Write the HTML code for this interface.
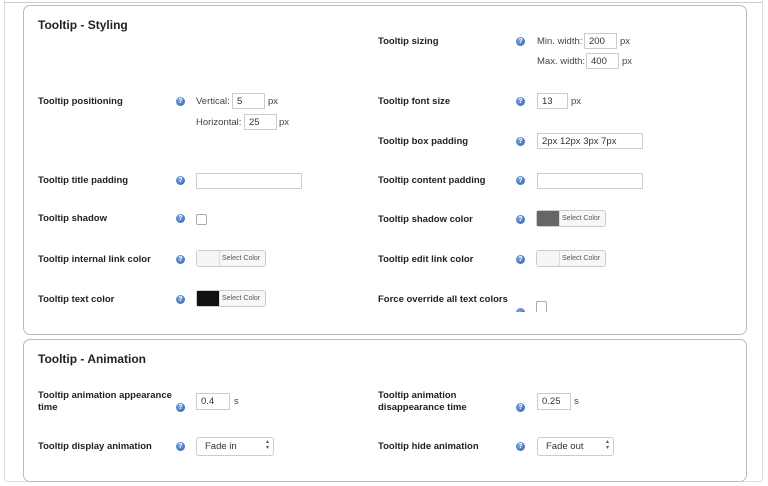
<!DOCTYPE html><html style="overflow:hidden;height:486px"><head><style>
body{margin:0;width:768px;height:486px;background:#fff;position:relative;overflow:hidden;font-family:"Liberation Sans",Arial,sans-serif;font-size:9.5px;color:#333}
.a{position:absolute}
.frame{position:absolute;left:4px;top:-10px;width:757px;height:490px;border:1px solid #ddd;border-radius:4px}
.panel{position:absolute;left:23px;width:722px;border:1px solid #bbb;border-radius:7px;background:#fff;overflow:hidden}
h3{position:absolute;margin:0;font-size:12px;font-weight:bold;color:#222;left:13px}
.l{position:absolute;font-weight:bold;color:#222;font-size:9.5px;line-height:12px}
.q{position:absolute;width:9px;height:9px;border-radius:50%;background:radial-gradient(circle at 40% 35%,#7fa7e0,#2a5caa);color:#fff;font-size:7px;font-weight:bold;text-align:center;line-height:9px}
.in{position:absolute;border:1px solid #ccc;height:16px;box-sizing:border-box;padding:2px 4px;font-size:9.5px;line-height:11px;color:#333;background:#fff}
.t{position:absolute;font-size:9.5px;color:#444;line-height:12px}
.cb{position:absolute;width:11px;height:11px;border:1px solid #aaa;box-sizing:border-box;border-radius:2px;background:#fff}
.cp{position:absolute;width:70px;height:17px;border:1px solid #ccc;border-radius:3px;box-sizing:border-box;background:#f7f7f7;font-size:7px;color:#555}
.cp .s{position:absolute;left:0;top:0;width:22px;height:15px;border-right:1px solid #ddd}
.cp span{position:absolute;left:25px;top:4px}
.sel{position:absolute;border:1px solid #ccc;border-radius:3px;height:19px;box-sizing:border-box;padding:3px 8px;font-size:9.5px;color:#333;background:#fff}
.sel:after{content:"\25B4\A\25BE";white-space:pre;position:absolute;right:4px;top:1px;font-size:6px;line-height:6px;color:#555}
</style></head><body>
<div class="frame"></div>
<div class="a" style="left:4px;top:2px;width:758px;height:1px;background:#ccc"></div>
<div class="panel" style="top:5px;height:328px">
<div style="position:absolute;left:-23px;top:-5px;width:768px;height:486px">
<h3 style="left:37px;top:17px">Tooltip - Styling</h3>
<div class="l" style="left:377px;top:35px">Tooltip sizing</div><div class="q" style="left:515px;top:36px">?</div>
<div class="t" style="left:536px;top:35px">Min. width:</div><div class="in" style="left:583px;top:32px;width:33px">200</div><div class="t" style="left:619px;top:35px">px</div>
<div class="t" style="left:536px;top:55px">Max. width:</div><div class="in" style="left:585px;top:52px;width:33px">400</div><div class="t" style="left:621px;top:55px">px</div>

<div class="l" style="left:37px;top:95px">Tooltip positioning</div><div class="q" style="left:175px;top:96px">?</div>
<div class="t" style="left:195px;top:95px">Vertical:</div><div class="in" style="left:231px;top:92px;width:33px">5</div><div class="t" style="left:267px;top:95px">px</div>
<div class="t" style="left:195px;top:116px">Horizontal:</div><div class="in" style="left:243px;top:113px;width:33px">25</div><div class="t" style="left:278px;top:116px">px</div>
<div class="l" style="left:377px;top:95px">Tooltip font size</div><div class="q" style="left:515px;top:96px">?</div>
<div class="in" style="left:536px;top:92px;width:31px">13</div><div class="t" style="left:570px;top:95px">px</div>
<div class="l" style="left:377px;top:135px">Tooltip box padding</div><div class="q" style="left:515px;top:136px">?</div>
<div class="in" style="left:536px;top:132px;width:106px">2px 12px 3px 7px</div>

<div class="l" style="left:37px;top:174px">Tooltip title padding</div><div class="q" style="left:175px;top:175px">?</div>
<div class="in" style="left:195px;top:172px;width:106px"></div>
<div class="l" style="left:377px;top:174px">Tooltip content padding</div><div class="q" style="left:515px;top:175px">?</div>
<div class="in" style="left:536px;top:172px;width:106px"></div>

<div class="l" style="left:37px;top:212px">Tooltip shadow</div><div class="q" style="left:175px;top:213px">?</div>
<div class="cb" style="left:195px;top:213px"></div>
<div class="l" style="left:377px;top:213px">Tooltip shadow color</div><div class="q" style="left:515px;top:214px">?</div>
<div class="cp" style="left:535px;top:209px"><div class="s" style="background:#666"></div><span>Select Color</span></div>

<div class="l" style="left:37px;top:253px">Tooltip internal link color</div><div class="q" style="left:175px;top:254px">?</div>
<div class="cp" style="left:195px;top:249px"><div class="s" style="background:#f5f5f5"></div><span>Select Color</span></div>
<div class="l" style="left:377px;top:253px">Tooltip edit link color</div><div class="q" style="left:515px;top:254px">?</div>
<div class="cp" style="left:535px;top:249px"><div class="s" style="background:#f5f5f5"></div><span>Select Color</span></div>

<div class="l" style="left:37px;top:293px">Tooltip text color</div><div class="q" style="left:175px;top:294px">?</div>
<div class="cp" style="left:195px;top:289px"><div class="s" style="background:#111"></div><span>Select Color</span></div>
<div class="l" style="left:377px;top:293px">Force override all text colors</div>
<div class="a" style="left:377px;top:300px;width:260px;height:11px;overflow:hidden"><div class="q" style="left:138px;top:7px"></div><div class="cb" style="left:158px;top:0px;height:20px"></div></div>
</div></div>

<div class="panel" style="top:339px;height:141px">
<div style="position:absolute;left:-23px;top:-339px;width:768px;height:486px">
<h3 style="left:37px;top:351px">Tooltip - Animation</h3>
<div class="l" style="left:37px;top:389px">Tooltip animation appearance<br>time</div><div class="q" style="left:175px;top:402px">?</div>
<div class="in" style="left:195px;top:392px;width:34px;height:17px">0.4</div><div class="t" style="left:233px;top:395px">s</div>
<div class="l" style="left:377px;top:389px">Tooltip animation<br>disappearance time</div><div class="q" style="left:515px;top:402px">?</div>
<div class="in" style="left:536px;top:392px;width:34px;height:17px">0.25</div><div class="t" style="left:573px;top:395px">s</div>
<div class="l" style="left:37px;top:440px">Tooltip display animation</div><div class="q" style="left:175px;top:441px">?</div>
<div class="sel" style="left:195px;top:436px;width:78px">Fade in</div>
<div class="l" style="left:377px;top:440px">Tooltip hide animation</div><div class="q" style="left:515px;top:441px">?</div>
<div class="sel" style="left:536px;top:436px;width:77px">Fade out</div>
</div></div>
</body></html>
